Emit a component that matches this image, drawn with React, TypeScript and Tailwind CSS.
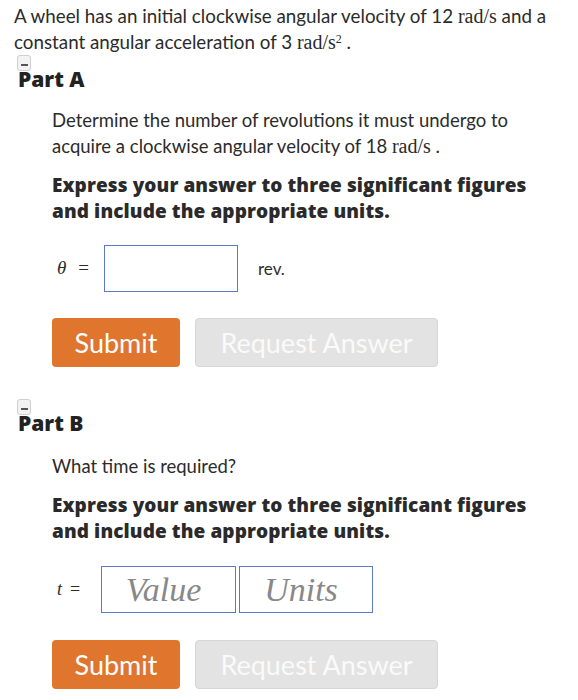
export default function App() {
  const sans = { fontFamily: "Lato, 'Open Sans', sans-serif" };

  const Collapse = () => (
    <span className="absolute left-[-1px] top-[-12px] flex h-[16px] w-[14px] items-center justify-center rounded-[3px] border border-[#d0d0d0] bg-[#f3f3f3] pt-[3px]">
      <span className="h-[2px] w-[7px] bg-[#555]" />
    </span>
  );

  const Buttons = () => (
    <div className="flex gap-[15px]">
      <button className="h-[49px] w-[128px] rounded-[4px] bg-[#e0752d] text-[27px] leading-none text-white">
        Submit
      </button>
      <button className="h-[49px] w-[243px] rounded-[4px] border border-[#d6d6d6] bg-[#e3e3e3] text-[27px] leading-none text-[#fafafa]">
        Request Answer
      </button>
    </div>
  );

  const Bold = () => (
    <p className="mt-[13px] font-['Open_Sans',sans-serif] text-[19px] font-extrabold leading-[26px] tracking-[0.1px] text-[#2a2a2a]">
      Express your answer to three significant figures
      <br />
      and include the appropriate units.
    </p>
  );

  const Part = ({ label }: { label: string }) => (
    <div className="relative ml-[18px]">
      <Collapse />
      <h2 className="relative font-['Open_Sans',sans-serif] text-[21px] font-extrabold leading-[24px] text-[#222]">
        {label}
      </h2>
    </div>
  );

  return (
    <div className="min-h-[700px] bg-white text-[#2b2b2b]" style={sans}>
      <p className="pl-[14px] pt-[3px] text-[18.8px] leading-[26px]">
        A wheel has an initial clockwise angular velocity of 12{" "}
        <span className="font-['Liberation_Serif',serif] text-[20px] leading-none">rad/s</span> and a
        <br />
        constant angular acceleration of 3{" "}
        <span className="font-['Liberation_Serif',serif] text-[20px] leading-none">
          rad/s<sup className="text-[12px]">2</sup>
        </span>{" "}
        .
      </p>

      <div className="mt-[12px]">
        <Part label="Part A" />
      </div>

      <div className="pl-[52px]">
        <p className="mt-[16px] text-[18.5px] leading-[26px]">
          Determine the number of revolutions it must undergo to
          <br />
          acquire a clockwise angular velocity of 18{" "}
          <span className="font-['Liberation_Serif',serif] text-[20px] leading-none">rad/s</span> .
        </p>
        <Bold />

        <div className="mt-[21px] flex items-center">
          <span className="flex w-[52px] gap-[12px] pl-[5px] font-['Liberation_Serif',serif] text-[19px]">
            <i>θ</i>
            <span>=</span>
          </span>
          <div className="h-[47px] w-[134px] border border-[#5b7bc9]" />
          <span className="ml-[20px] text-[17px]">rev.</span>
        </div>

        <div className="mt-[26px]">
          <Buttons />
        </div>
      </div>

      <div className="mt-[44px]">
        <Part label="Part B" />
      </div>

      <div className="pl-[52px]">
        <p className="mt-[18px] text-[18.5px] leading-[26px]">What time is required?</p>
        <Bold />

        <div className="mt-[22px] flex items-center">
          <span className="flex w-[49px] gap-[8px] pl-[5px] font-['Liberation_Serif',serif] text-[18px]">
            <i>t</i>
            <span>=</span>
          </span>
          <div className="flex h-[47px] w-[135px] items-center justify-center border border-[#5b7bc9] pr-[10px] font-['Liberation_Serif',serif] text-[34px] italic text-[#888]">
            Value
          </div>
          <div className="ml-[3px] flex h-[47px] w-[134px] items-center justify-center border border-[#5b7bc9] pr-[10px] font-['Liberation_Serif',serif] text-[34px] italic text-[#888]">
            Units
          </div>
        </div>

        <div className="mt-[27px]">
          <Buttons />
        </div>
      </div>
    </div>
  );
}
